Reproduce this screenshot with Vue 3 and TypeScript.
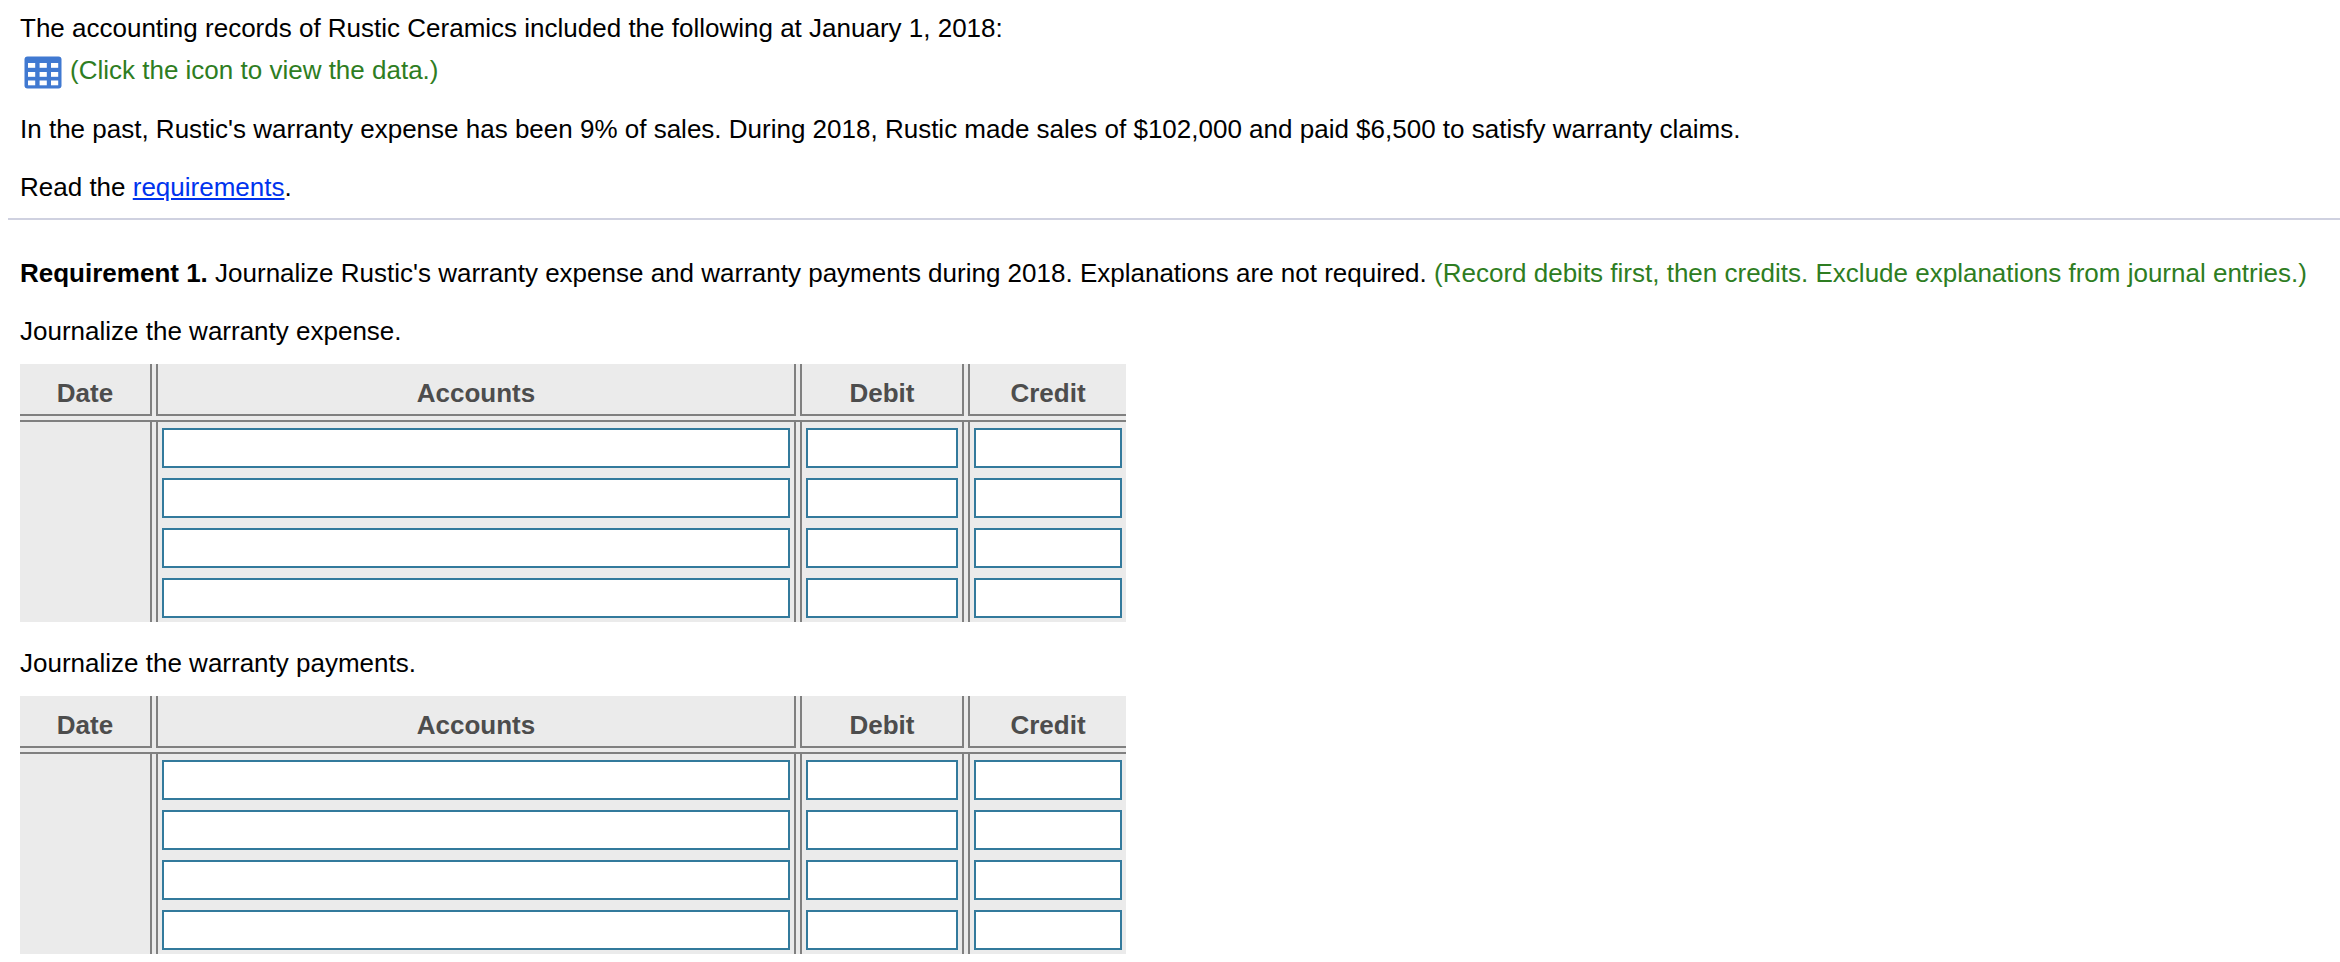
<script setup lang="ts">
interface Journal { title: string }
const journals: Journal[] = [
  { title: 'Journalize the warranty expense.' },
  { title: 'Journalize the warranty payments.' },
]
const rows: number[] = [1, 2, 3, 4]
const iconCols: number[] = [4, 15.6, 27]
const iconRows: number[] = [7, 16, 24.5]
</script>

<template>
  <main class="page">
    <p class="line first">The accounting records of Rustic Ceramics included the following at January 1, 2018:</p>
    <p class="line data">
      <svg class="icon" width="38" height="33" viewBox="0 0 38 33" aria-hidden="true">
        <defs>
          <filter id="soft" x="-20%" y="-20%" width="140%" height="140%">
            <feGaussianBlur stdDeviation="0.7" />
          </filter>
        </defs>
        <rect x="0.5" y="0.5" width="37" height="32" rx="3" fill="#4079d1" />
        <g fill="#ffffff" filter="url(#soft)">
          <template v-for="y in iconRows" :key="y">
            <rect v-for="x in iconCols" :key="x" :x="x" :y="y" width="7.2" height="4.8" />
          </template>
        </g>
      </svg>
      <span class="green click">(Click the icon to view the data.)</span>
    </p>
    <p class="line past">In the past, Rustic's warranty expense has been 9% of sales. During 2018, Rustic made sales of $102,000 and paid $6,500 to satisfy warranty claims.</p>
    <p class="line read">Read the <a href="#" class="link">requirements</a>.</p>
    <hr class="rule" />
    <p class="line req"><strong>Requirement 1.</strong> Journalize Rustic's warranty expense and warranty payments during 2018. Explanations are not required. <span class="green">(Record debits first, then credits. Exclude explanations from journal entries.)</span></p>

    <section v-for="j in journals" :key="j.title" class="journal">
      <p class="line title">{{ j.title }}</p>
      <div class="table">
        <div class="head">
          <div class="cell date">Date</div>
          <div class="cell acc">Accounts</div>
          <div class="cell deb">Debit</div>
          <div class="cell cre">Credit</div>
        </div>
        <div class="body">
          <div class="col date"></div>
          <div class="col acc">
            <input v-for="r in rows" :key="r" class="field" type="text" />
          </div>
          <div class="col deb">
            <input v-for="r in rows" :key="r" class="field" type="text" />
          </div>
          <div class="col cre">
            <input v-for="r in rows" :key="r" class="field" type="text" />
          </div>
        </div>
      </div>
    </section>
  </main>
</template>

<style>
html, body { margin: 0; background: #ffffff; }
</style>

<style scoped>
.page {
  font-family: "Liberation Sans", Arial, sans-serif;
  font-size: 26px;
  color: #000000;
  padding: 12px 0 0 0;
}
.line {
  margin: 0 0 0 20px;
  line-height: 32px;
  white-space: nowrap;
}
.data {
  display: flex;
  align-items: flex-start;
  margin-left: 24px;
  margin-top: 11px;
  height: 32px;
  gap: 8px;
}
.icon { flex: none; margin-top: 1px; }
.click { line-height: 30px; }
.green { color: #2e7d22; }
.past { margin-top: 26px; }
.read { margin-top: 26px; }
.link { color: #0033ee; text-decoration: underline; }
.rule {
  border: 0;
  height: 2px;
  background: #cfd1e0;
  margin: 15px 0 0 8px;
}
.req { margin-top: 37px; }
.title { margin-top: 26px; margin-bottom: 17px; }
.journal + .journal .title { margin-top: 25px; }
.table {
  width: 1106px;
  margin-left: 20px;
  background: #ebebeb;
  --cols: 132px 640px 164px 158px;
}
.head, .body {
  display: grid;
  grid-template-columns: var(--cols);
  column-gap: 4px;
}
.head { margin-bottom: 4px; }
.cell {
  height: 50px;
  line-height: 58px;
  border-bottom: 2px solid #808080;
  text-align: center;
  font-weight: 700;
  color: #4d4d4d;
}
.cell.date { border-right: 2px solid #808080; }
.cell.acc, .cell.deb { border-left: 2px solid #808080; border-right: 2px solid #808080; }
.cell.cre { border-left: 2px solid #808080; }
.body {
  border-top: 2px solid #808080;
  height: 200px;
}
.col {
  display: flex;
  flex-direction: column;
  gap: 10px;
  padding: 6px 4px 0;
}
.col.date { border-right: 2px solid #808080; }
.col.acc, .col.deb { border-left: 2px solid #808080; border-right: 2px solid #808080; }
.col.cre { border-left: 2px solid #808080; }
.field {
  display: block;
  box-sizing: border-box;
  width: 100%;
  height: 40px;
  margin: 0;
  padding: 0;
  border: 2px solid #337a9c;
  border-radius: 0;
  background: #ffffff;
  outline: none;
}
</style>
